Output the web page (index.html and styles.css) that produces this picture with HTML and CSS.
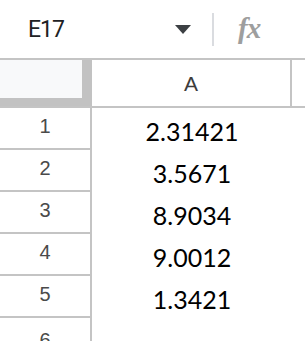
FILE: index.html
```html
<html lang="en">

<head>
    <meta charset="UTF-8">
    <meta name="viewport" content="width=device-width, initial-scale=1.0">
    <title>Sheet</title>
    <link rel="stylesheet" href="styles.css">
</head>

<body>
    <div class="formula-bar">
        <div class="name-box">
            <span class="cell-ref">E17</span>
            <span class="caret"></span>
        </div>
        <div class="divider"></div>
        <div class="fx">fx</div>
    </div>

    <div class="sheet">
        <div class="col-headers">
            <div class="corner"></div>
            <div class="col-head">A</div>
            <div class="col-head rest"></div>
        </div>

        <div class="row">
            <div class="row-num">1</div>
            <div class="cell">2.31421</div>
        </div>
        <div class="row">
            <div class="row-num">2</div>
            <div class="cell">3.5671</div>
        </div>
        <div class="row">
            <div class="row-num">3</div>
            <div class="cell">8.9034</div>
        </div>
        <div class="row">
            <div class="row-num">4</div>
            <div class="cell">9.0012</div>
        </div>
        <div class="row">
            <div class="row-num">5</div>
            <div class="cell">1.3421</div>
        </div>
        <div class="row last">
            <div class="row-num">6</div>
            <div class="cell"></div>
        </div>
    </div>
</body>

</html>
```

FILE: styles.css
```css
* {
    box-sizing: border-box;
}

body {
    margin: 0;
    padding: 0;
    background: #fff;
    font-family: "Liberation Sans", Arial, sans-serif;
    overflow: hidden;
    height: 341px;
}

.formula-bar {
    display: flex;
    align-items: center;
    height: 60px;
    border-bottom: 2px solid #c4c4c4;
}

.name-box {
    display: flex;
    align-items: center;
    width: 212px;
    padding-left: 28px;
}

.cell-ref {
    flex: 1;
    font-family: Roboto, sans-serif;
    font-size: 23px;
    letter-spacing: -1px;
    color: #202124;
}

.caret {
    width: 0;
    height: 0;
    margin-right: 21px;
    border-left: 8px solid transparent;
    border-right: 8px solid transparent;
    border-top: 9px solid #3c4043;
}

.divider {
    width: 2px;
    height: 33px;
    background-color: #dadce0;
}

.fx {
    margin-left: 24px;
    margin-top: -2px;
    font-family: "Liberation Serif", serif;
    font-style: italic;
    font-weight: bold;
    font-size: 29px;
    letter-spacing: -1px;
    color: #9e9e9e;
}

.col-headers {
    display: flex;
    height: 48px;
    border-bottom: 2px solid #c4c4c4;
}

.corner {
    width: 92px;
    background-color: #f8f9fa;
    border-right: 10px solid #c2c2c2;
    border-bottom: 8px solid #c2c2c2;
}

.col-head {
    width: 200px;
    display: flex;
    align-items: center;
    justify-content: center;
    padding-top: 2px;
    font-size: 21px;
    color: #3c3c3c;
    border-right: 2px solid #c4c4c4;
}

.col-head.rest {
    flex: 1;
    border-right: none;
}

.row {
    display: flex;
    height: 42px;
}

.row.last {
    height: 31px;
    overflow: hidden;
}

.row-num {
    width: 92px;
    display: flex;
    align-items: center;
    justify-content: center;
    padding-bottom: 4px;
    font-size: 20px;
    color: #4a4a4a;
    border-right: 2px solid #c4c4c4;
    border-bottom: 2px solid #c4c4c4;
}

.row.last .row-num {
    align-items: flex-start;
    padding-top: 11px;
    border-bottom: none;
}

.cell {
    width: 200px;
    display: flex;
    align-items: flex-end;
    justify-content: center;
    padding-bottom: 6px;
    font-family: Lato, sans-serif;
    font-size: 25px;
    line-height: 25px;
    color: #000;
}
```
